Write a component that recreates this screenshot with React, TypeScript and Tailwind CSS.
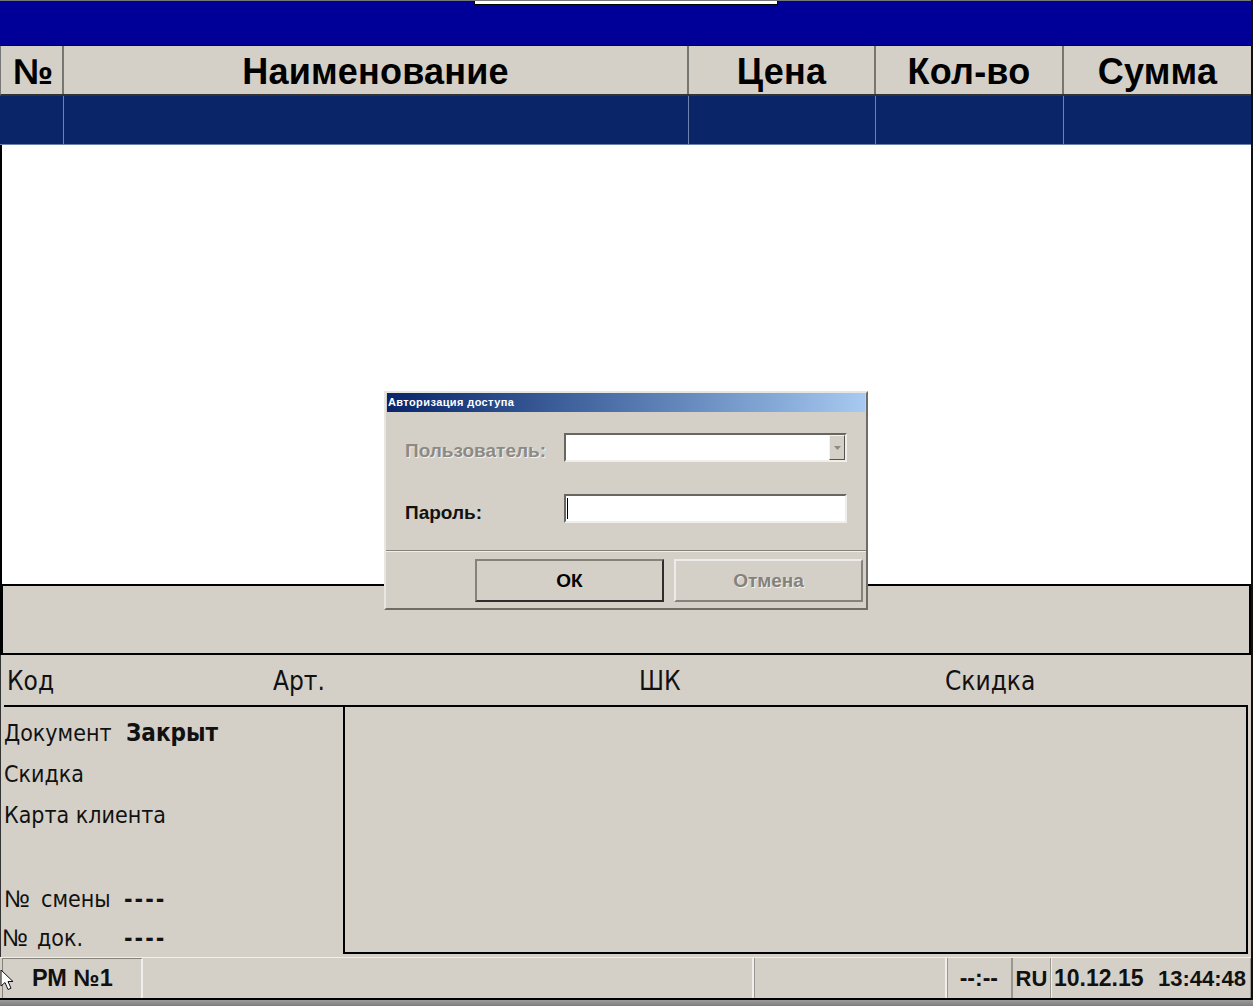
import React from 'react';

const arial = "font-['Liberation_Sans',Arial,sans-serif]";
const tahoma = "font-['DejaVu_Sans_Condensed','DejaVu_Sans',sans-serif]";

const columns = [
  { title: '№', width: 'w-[63px]' },
  { title: 'Наименование', width: 'w-[625px]' },
  { title: 'Цена', width: 'w-[187px]' },
  { title: 'Кол-во', width: 'w-[188px]' },
  { title: 'Сумма', width: 'flex-1' },
];

const AuthDialog = () => (
  <div className={`absolute left-[384px] top-[391px] w-[484px] h-[219px] bg-[#d4d0c8] border-t-2 border-l-2 border-t-[#e8e6e1] border-l-[#e8e6e1] border-r-2 border-b-2 border-r-[#6f6c66] border-b-[#6f6c66] flex flex-col ${arial}`}>
    {/* title bar */}
    <div className="h-[19px] mx-px bg-gradient-to-r from-[#0a246a] to-[#a6caf0] flex items-center pl-px text-[11px] tracking-[0.4px] font-bold text-white leading-none">
      Авторизация доступа
    </div>
    <div className="h-[139px] border-b border-b-[#85827b] px-[19px] pt-[21px] flex flex-col gap-[32px]">
      <div className="flex items-center h-[29px]">
        <span className="w-[160px] mt-[8px] text-[19px] font-bold text-[#8c8a85] [text-shadow:1px_1px_0_#f2f0ec]">Пользователь:</span>
        <div className="w-[285px] h-[29px] bg-white border-2 border-t-[#686660] border-l-[#686660] border-r-[#f0eeea] border-b-[#f0eeea] flex justify-end">
          <div className="w-[16px] h-[25px] bg-[#d4d0c8] border border-t-[#f5f4f1] border-l-[#f5f4f1] border-r-[#55534e] border-b-[#55534e] flex items-center justify-center">
            <svg width="7" height="4" viewBox="0 0 7 4">
              <path d="M0 0h7L3.500 4z" fill="#8c8a85" />
            </svg>
          </div>
        </div>
      </div>
      <div className="flex items-center h-[29px]">
        <span className="w-[160px] mt-[10px] text-[19px] font-bold text-[#111]">Пароль:</span>
        <div className="w-[285px] h-[29px] bg-white border-2 border-t-[#686660] border-l-[#686660] border-r-[#f0eeea] border-b-[#f0eeea] flex items-center pl-px">
          <div className="w-px h-[21px] bg-black" />
        </div>
      </div>
    </div>
    <div className="flex-1 border-t border-t-[#f0eeea] flex justify-end items-start gap-[10px] pt-[7px] pr-[3px]">
      <button className="w-[189px] h-[43px] pt-[2px] bg-[#d4d0c8] border-2 border-t-[#85827b] border-l-[#85827b] border-r-[#2e2d2a] border-b-[#2e2d2a] text-[19px] font-bold text-black">
        ОК
      </button>
      <button className="w-[189px] h-[43px] pt-[2px] bg-[#d4d0c8] border-2 border-t-[#eeece8] border-l-[#eeece8] border-r-[#85827b] border-b-[#85827b] text-[19px] font-bold text-[#85827b] [text-shadow:1px_1px_0_#f2f0ec]">
        Отмена
      </button>
    </div>
  </div>
);

const Cursor = () => (
  <svg className="absolute left-0 top-[969px]" width="15" height="24" viewBox="0 0 15 24">
    <path d="M1 1v16l4-3.500 3 7 3-1.300-3-6.700h5z" fill="#fff" stroke="#111" strokeWidth="1" />
  </svg>
);

const InfoRow = ({ label, className }: { label: string; className?: string }) => (
  <div className={`absolute whitespace-nowrap ${className}`}>{label}</div>
);

export default function App() {
  return (
    <div className={`relative w-[1253px] h-[1006px] overflow-hidden bg-[#d4d0c8] flex flex-col ${arial}`}>
      <div className="h-[1000px] shrink-0 flex flex-col border-r-2 border-r-[#111]">
        {/* top blue band */}
        <div className="h-[46px] shrink-0 bg-[#000099] border-t border-t-[#777] border-b border-b-black flex justify-center">
          <div className="w-[304px] h-[4px] bg-white border-b border-x border-black" />
        </div>

        {/* table header */}
        <div className="h-[50px] shrink-0 flex border-b-2 border-b-[#333] border-l border-l-[#777]">
          {columns.map((c, i) => (
            <div
              key={c.title}
              className={`${c.width} flex items-center justify-center pt-[3px] text-[36px] font-bold tracking-[0.2px] text-black ${i === 0 ? 'pl-[3px] ' : ''}${i < 4 ? 'border-r-2 border-r-[#77756f]' : ''}`}
            >
              {c.title}
            </div>
          ))}
        </div>

        {/* selected row */}
        <div className="h-[49px] shrink-0 bg-[#0a2568] border-b border-b-[#6d83ad] flex pl-px">
          {columns.map((c, i) => (
            <div key={c.title} className={`${c.width} ${i < 4 ? 'border-r border-r-[#6d83ad]' : ''}`} />
          ))}
        </div>

        {/* receipt body */}
        <div className="h-[439px] shrink-0 bg-white border-l-2 border-l-black" />

        {/* message box */}
        <div className="h-[71px] shrink-0 border-2 border-black border-l-[3px]" />

        {/* code row */}
        <div className={`h-[50px] shrink-0 relative text-[26px] text-[#111] border-l border-l-[#333] ${tahoma}`}>
          <InfoRow label="Код" className="left-[6px] top-[7px]" />
          <InfoRow label="Арт." className="left-[272px] top-[7px]" />
          <InfoRow label="ШК" className="left-[638px] top-[7px]" />
          <InfoRow label="Скидка" className="left-[944px] top-[7px]" />
        </div>

        {/* info panel */}
        <div className="h-[252px] shrink-0 flex pl-[3px] pr-[3px] border-l border-l-[#333]">
          <div className={`relative w-[339px] border-t-2 border-t-black text-[23px] text-[#111] ${tahoma}`}>
            <div className="absolute left-0 top-[10px] whitespace-nowrap leading-[32px]">Документ</div>
            <div className="absolute left-[122px] top-[10px] whitespace-nowrap leading-[32px] text-[24px] font-bold">Закрыт</div>
            <div className="absolute left-0 top-[51px] leading-[32px]">Скидка</div>
            <div className="absolute left-0 top-[92px] whitespace-nowrap leading-[32px]">Карта клиента</div>
            <div className="absolute left-0 top-[176px] flex items-baseline whitespace-nowrap leading-[32px]">
              <span className={`w-[37px] text-[24px] ${arial}`}>№</span>
              <span>смены</span>
            </div>
            <div className="absolute left-[120px] top-[176px] leading-[32px] tracking-[2px] font-bold">----</div>
            <div className="absolute left-[-2px] top-[215px] flex items-baseline whitespace-nowrap leading-[32px]">
              <span className={`w-[35px] text-[24px] ${arial}`}>№</span>
              <span>док.</span>
            </div>
            <div className="absolute left-[120px] top-[215px] leading-[32px] tracking-[2px] font-bold">----</div>
          </div>
          <div className="flex-1 border-2 border-black mb-[3px]" />
        </div>

        {/* status bar */}
        <div className="h-[43px] shrink-0 border-t border-t-[#f1efeb] border-b-2 border-b-black flex font-bold text-[#111]">
          <div className="w-[141px] ml-[2px] border-t border-t-[#85827b] border-l border-l-[#85827b] border-r-2 border-r-[#f1efeb] flex items-center pl-[29px] text-[23.500px]">РМ №1</div>
          <div className="w-[611px] border-r-2 border-r-[#f1efeb]" />
          <div className="w-[193px] border-l border-l-[#9a9791] border-r-2 border-r-[#f1efeb]" />
          <div className="w-[65px] border-l border-l-[#9a9791] border-r border-r-[#9a9791] flex items-center justify-end pr-[13px] text-[23px]">--:--</div>
          <div className="w-[39px] border-x border-x-[#9a9791] flex items-center justify-center text-[22px]">RU</div>
          <div className="flex-1 border-l border-l-[#f1efeb] border-r border-r-[#9a9791] flex items-center justify-between pl-[2px] pr-[4px] whitespace-nowrap">
            <span className="text-[23px]">10.12.15</span>
            <span className="text-[22px]">13:44:48</span>
          </div>
        </div>
      </div>

      {/* window bottom edge */}
      <div className="flex-1 bg-gradient-to-b from-[#9b9b9b] to-[#7f7f7f]" />

      <AuthDialog />
      <Cursor />
    </div>
  );
}
